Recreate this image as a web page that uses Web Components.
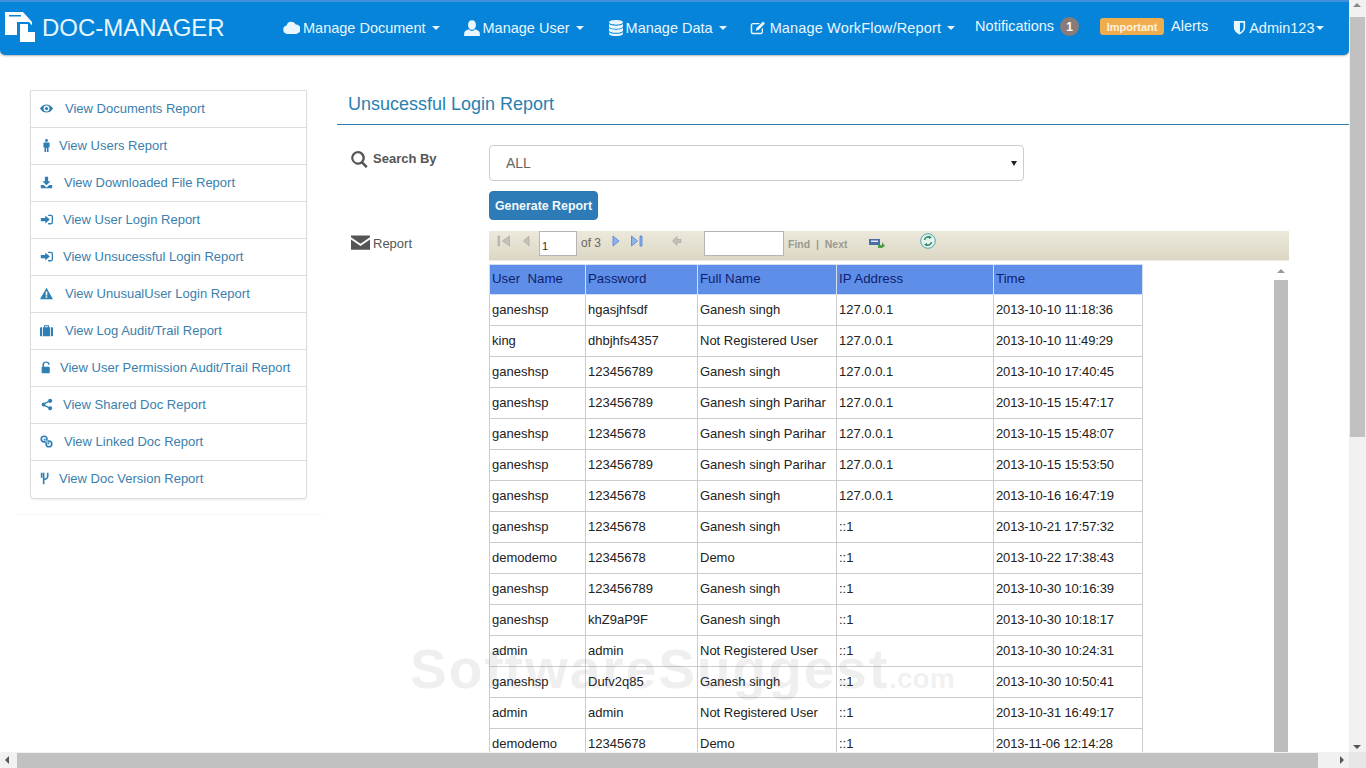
<!DOCTYPE html>
<html lang="en">
  <head>
    <meta charset="UTF-8" />
    <title>Doc Manager</title>
    <style>
      html, body { margin: 0; height: 100%; overflow: hidden; background: #fff; font-family: "Liberation Sans", Arial, sans-serif; }
    </style>
  </head>
  <body>
    <doc-page>
      <doc-navbar slot="nav">
        <nav-item icon="cloud" icon-width="17" gap="3" caret>Manage Document</nav-item>
        <nav-item icon="user" icon-width="18" gap="2" caret style="margin-left:23px">Manage User</nav-item>
        <nav-item icon="database" icon-width="16" gap="2" caret style="margin-left:24px">Manage Data</nav-item>
        <nav-item icon="edit" icon-width="16" gap="4" caret style="margin-left:23px;letter-spacing:.15px">Manage WorkFlow/Report</nav-item>
        <nav-item raised style="margin-left:20px">Notifications<nav-badge>1</nav-badge></nav-item>
        <nav-item raised style="margin-left:21px"><nav-label>Important</nav-label>Alerts</nav-item>
        <nav-item icon="shield" icon-width="15" gap="2" caret tight style="margin-left:24px">Admin123</nav-item>
      </doc-navbar>

      <side-menu slot="side">
        <side-link icon="eye" offset="25">View Documents Report</side-link>
        <side-link icon="male" offset="19">View Users Report</side-link>
        <side-link icon="download" offset="24">View Downloaded File Report</side-link>
        <side-link icon="signin" offset="23">View User Login Report</side-link>
        <side-link icon="signin" offset="23">View Unsucessful Login Report</side-link>
        <side-link icon="warning" offset="25">View UnusualUser Login Report</side-link>
        <side-link icon="briefcase" offset="25">View Log Audit/Trail Report</side-link>
        <side-link icon="unlock" offset="20">View User Permission Audit/Trail Report</side-link>
        <side-link icon="share" offset="23">View Shared Doc Report</side-link>
        <side-link icon="link" offset="24">View Linked Doc Report</side-link>
        <side-link icon="fork" offset="19">View Doc Version Report</side-link>
      </side-menu>

      <report-panel slot="main" heading="Unsucessful Login Report">
        <report-toolbar slot="toolbar"></report-toolbar>
        <report-table slot="table"></report-table>
      </report-panel>
    </doc-page>

    <script>
      const ICONS = {
        cloud: "M4 14a4 4 0 0 1-.6-7.9A4.6 4.6 0 0 1 12 5.2 4.4 4.4 0 0 1 12.4 14z",
        user: "M8 1c2.2 0 3.5 1.7 3.5 4S10.200 9.500 8 9.500 4.500 7.300 4.500 5 5.800 1 8 1zM5.300 9.200C6 10.200 7 10.700 8 10.700s2-.5 2.700-1.500C13 9.800 15 11 15 13.200V15H1v-1.800C1 11 3 9.800 5.300 9.200z",
        database: "M8 0c3.500 0 7 .8 7 2.300S11.500 4.700 8 4.700 1 3.800 1 2.300 4.500 0 8 0zM1 4c1.300 1.200 4.300 1.700 7 1.700S13.700 5.200 15 4v2.400c0 1.500-3.500 2.300-7 2.300s-7-.8-7-2.300zM1 8.100c1.300 1.200 4.300 1.700 7 1.700s5.700-.5 7-1.700v2.400c0 1.500-3.500 2.300-7 2.300s-7-.8-7-2.300zM1 12.200c1.300 1.100 4.300 1.600 7 1.600s5.700-.5 7-1.600v1.500C15 15.200 11.500 16 8 16S1 15.200 1 13.700z",
        edit: "M3 3h7L8.700 4.300H3.200c-.6 0-1 .4-1 1v6.500c0 .6.4 1 1 1h7.500c.6 0 1-.4 1-1V9l1.300-1.300V12c0 1.300-1 2.300-2.300 2.300H3A2.300 2.300 0 0 1 .7 12V5.300C.7 4 1.700 3 3 3zM13 1.500 15 3.500 8.500 10 5.800 10.700 6.500 8z",
        shield: "M2 1h12v7c0 3.500-3 6-6 7.500-3-1.500-6-4-6-7.500zM8.500 2.800v10.600c1.900-1.200 3.800-3 3.800-5.400V2.800z",
        eye: "M0 8c2-3.600 5-5 8-5s6 1.400 8 5c-2 3.600-5 5-8 5s-6-1.400-8-5zM8 4.400a3.600 3.600 0 1 0 0 7.200 3.600 3.600 0 0 0 0-7.200zM8 6a2 2 0 1 1 0 4 2 2 0 0 1 0-4z",
        male: "M8 0a1.800 1.800 0 1 1 0 3.600A1.800 1.800 0 0 1 8 0zM5.500 4.300h5c.8 0 1.300.5 1.300 1.300v4.400H10.500v6H8.500v-5h-1v5H5.500v-6H4.200V5.600c0-.8.5-1.300 1.300-1.300z",
        download: "M6 1h4v5.500h3L8 11.500 3 6.500h3zM1 11h3.500L8 14l3.500-3H15v4H1z",
        signin: "M10 2h3.500C14.900 2 16 3.100 16 4.500v7c0 1.400-1.100 2.500-2.500 2.500H10v-1.600h3.200c.7 0 1.200-.5 1.200-1.200V4.800c0-.7-.5-1.200-1.200-1.200H10zM6.500 3 12 8l-5.500 5V10H1V6h5.500z",
        warning: "M8 1 16 15H0zM7 5.500v5h2v-5zM7 11.300v2h2v-2z",
        briefcase: "M5 1.500h6V4h4c.6 0 1 .4 1 1v9c0 .6-.4 1-1 1H1c-.6 0-1-.4-1-1V5c0-.6.4-1 1-1h4zM6.300 2.800V4h3.400V2.800zM2.500 4v11h1V4zM12.500 4v11h1V4z",
        unlock: "M3 7V4.500C3 2 5 .5 7.500.5S12 2 12 4.500H10C10 3 9 2.300 7.500 2.300S5 3 5 4.500V7h6c.6 0 1 .4 1 1v6c0 .6-.4 1-1 1H3c-.6 0-1-.4-1-1V8c0-.6.4-1 1-1z",
        share: "M12.500 1a2.500 2.500 0 1 1-1.900 4.100L6.400 7.300a2.500 2.500 0 0 1 0 1.400l4.200 2.200a2.500 2.500 0 1 1-.6 1.400L5.700 10.200a2.500 2.500 0 1 1 0-4.400L10 3.600A2.500 2.500 0 0 1 12.500 1z",
        link: "M5 .5a4.500 4.500 0 1 1 0 9 4.500 4.500 0 0 1 0-9zM5 2.500a2.500 2.500 0 1 0 0 5 2.500 2.500 0 0 0 0-5zM11 6.500a4.500 4.500 0 1 1 0 9 4.500 4.500 0 0 1 0-9zM11 8.500a2.500 2.500 0 1 0 0 5 2.500 2.500 0 0 0 0-5zM5.500 4.200 11.800 10.500 10.500 11.800 4.200 5.500z",
        fork: "M1 1h2v6H1zM3.500 1h2v14h-2zM5.500 8c2 0 3-1 3-3V1h2v4c0 3-2.500 5-5 5z",
        search: "M6.500 0a6.500 6.500 0 0 1 5.200 10.400l4 4-1.700 1.700-4-4A6.500 6.500 0 1 1 6.500 0zM6.500 2.200a4.300 4.300 0 1 0 0 8.600 4.300 4.300 0 0 0 0-8.600z",
        envelope: "M0 2h16v1.500L8 9 0 3.500zM0 5.500l8 5.500 8-5.500V14H0z"
      };

      function svgIcon(name, size, extra) {
        return `<svg width="${size}" height="${size}" viewBox="0 0 16 16" fill="currentColor" style="display:block;flex:none;${extra || ""}"><path fill-rule="evenodd" d="${ICONS[name]}"/></svg>`;
      }

      class DocPage extends HTMLElement {
        constructor() {
          super();
          this.attachShadow({ mode: "open" });
          this.shadowRoot.innerHTML = `
            <style>
              :host { display: grid; grid-template-columns: 1349px 17px; grid-template-rows: 752px 16px; width: 1366px; height: 768px; position: relative; overflow: hidden; }
              .view { overflow: hidden; display: flex; flex-direction: column; }
              .top { flex: none; }
              .body { flex: 1; min-height: 0; display: flex; }
              .side { flex: none; }
              .main { flex: 1; min-width: 0; }
              .vbar { background: #f1f1f1; display: flex; flex-direction: column; align-items: center; padding-top: 17px; box-sizing: border-box; position: relative; }
              .vbar i { width: 15px; height: 420px; background: #c1c1c1; display: block; }
              .hbar { background: #f1f1f1; padding-left: 17px; position: relative; }
              .hbar i { display: block; width: 1301px; height: 15px; margin-top: 1px; background: #c1c1c1; }
              .corner { background: #e6e6e6; }
              .arrow { position: absolute; width: 0; height: 0; border: 4px solid transparent; }
              .up { top: 3px; left: 4px; border-top: 0; border-bottom-color: #8a8a8a; }
              .down { bottom: 3px; left: 4px; border-bottom: 0; border-top-color: #555; }
              .left { left: 5px; top: 4px; border-left: 0; border-right-color: #555; }
              .right { right: 5px; top: 4px; border-right: 0; border-left-color: #555; }
              .mark { position: absolute; left: 410px; top: 637px; white-space: nowrap; font: bold 55px "Liberation Sans", Arial, sans-serif; letter-spacing: 2px; color: rgba(110, 110, 110, .11); pointer-events: none; }
              .mark small { font-size: 28px; letter-spacing: 0; }
            </style>
            <div class="view">
              <div class="top"><slot name="nav"></slot></div>
              <div class="body">
                <div class="side"><slot name="side"></slot></div>
                <div class="main"><slot name="main"></slot></div>
              </div>
            </div>
            <div class="vbar"><span class="arrow up"></span><i></i><span class="arrow down"></span></div>
            <div class="hbar"><span class="arrow left"></span><i></i><span class="arrow right"></span></div>
            <div class="corner"></div>
            <div class="mark">SoftwareSuggest<small>.com</small></div>
          `;
        }
      }

      class DocNavbar extends HTMLElement {
        constructor() {
          super();
          this.attachShadow({ mode: "open" });
          this.shadowRoot.innerHTML = `
            <style>
              :host { display: flow-root; height: 56px; box-sizing: border-box; }
              .bar { height: 53px; margin-top: 2px; padding-bottom: 2px; box-sizing: border-box; background: #0584d9; border-radius: 0 0 5px 5px; box-shadow: 0 -2px 0 #3f8fdc, 0 1px 2px rgba(0, 0, 0, .3); display: flex; align-items: center; color: #eaf6ff; }
              .brand { display: flex; align-items: center; width: 283px; flex: none; padding-left: 5px; box-sizing: border-box; font-size: 24px; color: #e6f6ff; }
              .brand svg { display: block; margin-right: 4px; }
              nav { display: flex; align-items: center; font-size: 14.5px; height: 100%; }
            </style>
            <div class="bar">
              <div class="brand">
                <svg width="33" height="33" viewBox="0 0 33 33">
                  <path fill="#fff" d="M0 1h18l9 10v13H0z" />
                  <path fill="#0584d9" d="M4 4h12v1.500H4zM12 11h12l8 9v13H12z" />
                  <path fill="#fff" d="M15 13h8v8h7v10H15z" />
                </svg>
                DOC-MANAGER
              </div>
              <nav><slot></slot></nav>
            </div>
          `;
        }
      }

      class NavItem extends HTMLElement {
        constructor() {
          super();
          this.attachShadow({ mode: "open" });
        }

        connectedCallback() {
          const icon = this.getAttribute("icon");
          const width = this.getAttribute("icon-width") || "16";
          const gap = this.getAttribute("gap") || "3";
          const caretGap = this.hasAttribute("tight") ? "2" : "6";
          this.shadowRoot.innerHTML = `
            <style>
              :host { display: flex; align-items: center; flex: none; white-space: nowrap; position: relative; top: ${this.hasAttribute("raised") ? "-2" : "0"}px; }
              .caret { width: 0; height: 0; margin-left: ${caretGap}px; border: 4px solid transparent; border-bottom: 0; border-top-color: #e6f6ff; }
            </style>
            ${icon ? svgIcon(icon, width, `margin-right:${gap}px`) : ""}
            <slot></slot>
            ${this.hasAttribute("caret") ? '<span class="caret"></span>' : ""}
          `;
        }
      }

      class NavBadge extends HTMLElement {
        constructor() {
          super();
          this.attachShadow({ mode: "open" });
          this.shadowRoot.innerHTML = `
            <style>
              :host { display: inline-flex; align-items: center; justify-content: center; width: 19px; height: 19px; margin-left: 6px; position: relative; top: 1px; border-radius: 10px; background: #8b7b78; color: #fff; font-size: 12px; font-weight: bold; }
            </style>
            <slot></slot>
          `;
        }
      }

      class NavLabel extends HTMLElement {
        constructor() {
          super();
          this.attachShadow({ mode: "open" });
          this.shadowRoot.innerHTML = `
            <style>
              :host { display: inline-flex; align-items: center; justify-content: center; width: 64px; height: 17px; margin-right: 7px; position: relative; top: 1px; border-radius: 3px; background: #f0ad4e; color: #fff3dd; font-size: 11px; font-weight: bold; }
            </style>
            <slot></slot>
          `;
        }
      }

      class SideMenu extends HTMLElement {
        constructor() {
          super();
          this.attachShadow({ mode: "open" });
          this.shadowRoot.innerHTML = `
            <style>
              :host { display: block; width: 277px; padding: 34px 15px 15px; margin-left: 15px; border-bottom: 1px solid #f6f6f6; }
              .list { border: 1px solid #ddd; border-radius: 0 0 4px 4px; box-shadow: 0 1px 2px rgba(0, 0, 0, .08); background: #fff; }
              ::slotted(side-link:last-child) { border-bottom: 0; }
            </style>
            <div class="list"><slot></slot></div>
          `;
        }
      }

      class SideLink extends HTMLElement {
        constructor() {
          super();
          this.attachShadow({ mode: "open" });
        }

        connectedCallback() {
          const offset = this.getAttribute("offset") || "24";
          this.shadowRoot.innerHTML = `
            <style>
              :host { display: block; height: 37px; box-sizing: border-box; border-bottom: 1px solid #ddd; font-size: 13px; color: #3b80ad; white-space: nowrap; }
              .row { display: flex; align-items: center; height: 100%; padding: 0 0 2px 9px; box-sizing: border-box; }
              .ico { width: ${offset}px; flex: none; color: #2f7fb5; }
            </style>
            <div class="row"><span class="ico">${svgIcon(this.getAttribute("icon"), 13)}</span><slot></slot></div>
          `;
        }
      }

      class ReportPanel extends HTMLElement {
        constructor() {
          super();
          this.attachShadow({ mode: "open" });
        }

        connectedCallback() {
          this.shadowRoot.innerHTML = `
            <style>
              :host { display: flex; flex-direction: column; margin-left: 15px; height: 696px; color: #555; font-size: 13px; overflow: hidden; }
              h2 { margin: 0; flex: none; height: 69px; box-sizing: border-box; padding: 37px 0 0 11px; border-bottom: 1px solid #2d7fb0; font: 18px/22px "Liberation Sans", Arial, sans-serif; color: #2a7fb0; }
              .form { flex: 1; min-height: 0; display: grid; grid-template-columns: 152px 1fr; grid-template-rows: 36px 29px 1fr; row-gap: 10px; padding-top: 20px; }
              .label { display: flex; align-items: flex-start; padding-left: 14px; }
              .search { font-weight: bold; padding-top: 6px; }
              .report { padding-top: 6px; }
              .pick { position: relative; width: 535px; }
              .pick::after { content: ""; position: absolute; right: 7px; top: 16px; width: 0; height: 0; border: 3.500px solid transparent; border-bottom: 0; border-top: 5px solid #222; }
              select { appearance: none; width: 535px; height: 36px; padding: 0 0 0 16px; border: 1px solid #ccc; border-radius: 4px; background: #fff; color: #666; font: 14px "Liberation Sans", Arial, sans-serif; }
              button { display: block; width: 109px; height: 29px; padding: 0; border: 1px solid #2e78ad; border-radius: 4px; background: #2d7cb8; color: #f2f8fc; font: bold 12.400px "Liberation Sans", Arial, sans-serif; }
              .viewer { display: flex; flex-direction: column; min-height: 0; margin: 1px 60px 0 0; }
            </style>
            <h2>${this.getAttribute("heading")}</h2>
            <div class="form">
              <div class="label search">${svgIcon("search", 17, "margin-right:5px")}Search By</div>
              <div class="pick"><select><option>ALL</option></select></div>
              <div></div>
              <div><button type="button">Generate Report</button></div>
              <div class="label report">${svgIcon("envelope", 19, "margin:-3px 3px 0 0")}Report</div>
              <div class="viewer"><slot name="toolbar"></slot><slot name="table"></slot></div>
            </div>
          `;
        }
      }

      class ReportToolbar extends HTMLElement {
        constructor() {
          super();
          this.attachShadow({ mode: "open" });
          this.shadowRoot.innerHTML = `
            <style>
              :host { display: flex; align-items: center; flex: none; height: 30px; box-sizing: border-box; padding-bottom: 4px; background: linear-gradient(#ece9dc, #dcd7c4); border-bottom: 1px solid #efede4; font-size: 12px; color: #666; }
              svg { display: block; flex: none; margin-bottom: 6px; }
              input { box-sizing: border-box; height: 25px; border: 1px solid #b5b5b5; background: #fff; padding: 4px 0 0 2px; font: 11px "Liberation Sans", Arial, sans-serif; color: #333; }
              .find { color: #9a9a90; font-weight: bold; font-size: 10.500px; white-space: nowrap; }
            </style>
            <svg width="14" height="12" viewBox="0 0 14 12" style="margin-left:8px"><path fill="#c2c2ba" stroke="#a3a39b" stroke-width=".6" d="M1 1h1.500v10H1zM12.500 1v10L5.500 6z"/></svg>
            <svg width="9" height="12" viewBox="0 0 9 12" style="margin-left:11px"><path fill="#c2c2ba" stroke="#a3a39b" stroke-width=".6" d="M7 1v10L1.500 6z"/></svg>
            <input style="width:38px;margin-left:8px" value="1" />
            <span style="margin:0 0 2px 4px">of 3</span>
            <svg width="9" height="12" viewBox="0 0 9 12" style="margin-left:11px"><path fill="#8fb3ee" stroke="#4b7fd8" stroke-width=".8" d="M1 1v10l6-5z"/></svg>
            <svg width="13" height="12" viewBox="0 0 13 12" style="margin-left:10px"><path fill="#8fb3ee" stroke="#4b7fd8" stroke-width=".8" d="M.5 1v10l6-5zM9 1h2v10H9z"/></svg>
            <svg width="10" height="12" viewBox="0 0 10 12" style="margin-left:28px"><path fill="#c2c2ba" stroke="#a3a39b" stroke-width=".6" d="M5 1.500v3h4v3H5v3L.5 6z"/></svg>
            <input style="width:80px;margin-left:22px" />
            <span class="find" style="margin-left:4px">Find&nbsp;&nbsp;|&nbsp;&nbsp;Next</span>
            <svg width="16" height="10" viewBox="0 0 16 10" style="margin-left:21px;margin-bottom:2px"><path fill="#4a6fa8" d="M0 1h11v6H0z"/><path fill="#dfe8f4" d="M2 2.500h7v1.500H2z"/><path fill="#4f9e4a" d="M9 7h4V4l3 4-3 2H9z"/></svg>
            <svg width="16" height="16" viewBox="0 0 16 16" style="margin-left:35px"><circle cx="8" cy="8" r="7.300" fill="#e8f3ee" stroke="#4ba7b5"/><path fill="none" stroke="#2f8f6a" stroke-width="1.600" d="M4.500 7A3.500 3.500 0 0 1 10 4.500M11.500 9A3.500 3.500 0 0 1 6 11.500"/><path fill="#2f8f6a" d="M9 2.500l3 2-3 1.500zM7 13.500l-3-2 3-1.500z"/></svg>
          `;
        }
      }

      const ROWS = [
        ["ganeshsp", "hgasjhfsdf", "Ganesh singh", "127.0.0.1", "2013-10-10 11:18:36"],
        ["king", "dhbjhfs4357", "Not Registered User", "127.0.0.1", "2013-10-10 11:49:29"],
        ["ganeshsp", "123456789", "Ganesh singh", "127.0.0.1", "2013-10-10 17:40:45"],
        ["ganeshsp", "123456789", "Ganesh singh Parihar", "127.0.0.1", "2013-10-15 15:47:17"],
        ["ganeshsp", "12345678", "Ganesh singh Parihar", "127.0.0.1", "2013-10-15 15:48:07"],
        ["ganeshsp", "123456789", "Ganesh singh Parihar", "127.0.0.1", "2013-10-15 15:53:50"],
        ["ganeshsp", "12345678", "Ganesh singh", "127.0.0.1", "2013-10-16 16:47:19"],
        ["ganeshsp", "12345678", "Ganesh singh", "::1", "2013-10-21 17:57:32"],
        ["demodemo", "12345678", "Demo", "::1", "2013-10-22 17:38:43"],
        ["ganeshsp", "123456789", "Ganesh singh", "::1", "2013-10-30 10:16:39"],
        ["ganeshsp", "khZ9aP9F", "Ganesh singh", "::1", "2013-10-30 10:18:17"],
        ["admin", "admin", "Not Registered User", "::1", "2013-10-30 10:24:31"],
        ["ganeshsp", "Dufv2q85", "Ganesh singh", "::1", "2013-10-30 10:50:41"],
        ["admin", "admin", "Not Registered User", "::1", "2013-10-31 16:49:17"],
        ["demodemo", "12345678", "Demo", "::1", "2013-11-06 12:14:28"]
      ];

      class ReportTable extends HTMLElement {
        constructor() {
          super();
          this.attachShadow({ mode: "open" });
          const head = ["User  Name", "Password", "Full Name", "IP Address", "Time"];
          const body = ROWS.map((r) => `<tr>${r.map((c) => `<td>${c}</td>`).join("")}</tr>`).join("");
          this.shadowRoot.innerHTML = `
            <style>
              :host { display: block; flex: 1; min-height: 0; position: relative; overflow: hidden; padding-top: 3px; box-sizing: border-box; }
              table { border-collapse: collapse; table-layout: fixed; width: 653px; font-size: 13px; color: #222; }
              th { height: 30px; padding: 0 0 2px 2px; text-align: left; font-weight: normal; font-size: 13.300px; background: #5f8ee8; color: #0d1f6e; border: 1px solid #d4dff2; white-space: pre; box-sizing: border-box; }
              td { height: 31px; padding: 0 0 2px 2px; border: 1px solid #ccc; box-sizing: border-box; white-space: nowrap; overflow: hidden; }
              td:last-child { letter-spacing: -.15px; }
              .sb { position: absolute; left: 785px; top: 3px; bottom: 0; width: 14px; padding-top: 16px; box-sizing: border-box; }
              .sb i { display: block; height: 100%; background: #bdbdbd; }
              .sb b { position: absolute; top: 5px; left: 3px; width: 0; height: 0; border: 4px solid transparent; border-top: 0; border-bottom-color: #999; }
            </style>
            <table>
              <colgroup><col style="width:96px" /><col style="width:112px" /><col style="width:139px" /><col style="width:157px" /><col style="width:149px" /></colgroup>
              <thead><tr>${head.map((h) => `<th>${h}</th>`).join("")}</tr></thead>
              <tbody>${body}</tbody>
            </table>
            <div class="sb"><b></b><i></i></div>
          `;
        }
      }

      window.customElements.define("doc-page", DocPage);
      window.customElements.define("doc-navbar", DocNavbar);
      window.customElements.define("nav-item", NavItem);
      window.customElements.define("nav-badge", NavBadge);
      window.customElements.define("nav-label", NavLabel);
      window.customElements.define("side-menu", SideMenu);
      window.customElements.define("side-link", SideLink);
      window.customElements.define("report-panel", ReportPanel);
      window.customElements.define("report-toolbar", ReportToolbar);
      window.customElements.define("report-table", ReportTable);
    </script>
  </body>
</html>
